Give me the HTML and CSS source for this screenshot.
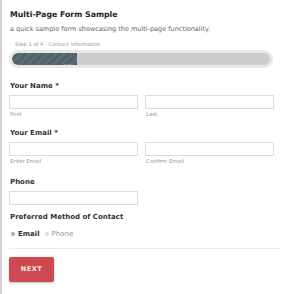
FILE: index.html
```html
<!DOCTYPE html>
<html lang="en">
<head>
    <meta charset="UTF-8">
    <meta name="viewport" content="width=device-width, initial-scale=1.0">
    <title>Multi-Page Form Sample</title>
    <link rel="stylesheet" href="styles.css">
</head>
<body>
    <div class="page">
        <form class="form">
            <h2 class="form-title">Multi-Page Form Sample</h2>
            <p class="form-desc">a quick sample form showcasing the multi-page functionality.</p>

            <!-- progress -->
            <div class="progress">
                <div class="progress-label">Step 1 of 4 - Contact Information</div>
                <div class="progress-track">
                    <div class="progress-bar" style="width: 25%"><span>25%</span></div>
                </div>
            </div>

            <div class="field field-name">
                <label class="field-label">Your Name <span class="req">*</span></label>
                <div class="field-row">
                    <div class="sub">
                        <input type="text">
                        <span class="sub-label">First</span>
                    </div>
                    <div class="sub">
                        <input type="text">
                        <span class="sub-label">Last</span>
                    </div>
                </div>
            </div>

            <div class="field field-email">
                <label class="field-label">Your Email <span class="req">*</span></label>
                <div class="field-row">
                    <div class="sub">
                        <input type="email">
                        <span class="sub-label">Enter Email</span>
                    </div>
                    <div class="sub">
                        <input type="email">
                        <span class="sub-label">Confirm Email</span>
                    </div>
                </div>
            </div>

            <div class="field field-phone">
                <label class="field-label">Phone</label>
                <div class="field-row half">
                    <div class="sub">
                        <input type="tel">
                    </div>
                </div>
            </div>

            <div class="field field-contact">
                <label class="field-label">Preferred Method of Contact</label>
                <div class="choices">
                    <label class="choice checked"><span class="dot"></span>Email</label>
                    <label class="choice"><span class="dot"></span>Phone</label>
                </div>
            </div>

            <div class="form-footer">
                <button type="button" class="next-btn">NEXT</button>
            </div>
        </form>
    </div>
</body>
</html>
```

FILE: styles.css
```css
body {
    margin: 0;
    font-family: "DejaVu Sans", sans-serif;
    background-color: #fff;
    color: #333;
}
.page {
    border-left: 2px solid #d2d2d2;
    min-height: 294px;
    box-sizing: border-box;
    padding: 9px 20px 0 7px;
}
.form-title {
    margin: 0;
    font-size: 7.8px;
    font-weight: bold;
    color: #222;
    line-height: 12px;
    padding-left: 1px;
}
.form-desc {
    margin: 3px 0 0 1px;
    font-size: 6.5px;
    color: #666;
    line-height: 10px;
}
.progress {
    margin-top: 7px;
}
.progress-label {
    font-size: 5.2px;
    color: #999;
    padding-left: 6px;
    line-height: 7px;
}
.progress-track {
    margin-top: 2px;
    width: 264px;
    box-sizing: border-box;
    height: 18px;
    border: 3px solid #e8e8e8;
    border-radius: 9px;
    background-color: #cdcdcd;
    overflow: hidden;
}
.progress-bar {
    height: 100%;
    border-radius: 6px 0 0 6px;
    background-color: #4f6069;
    background-image: repeating-linear-gradient(135deg, rgba(255,255,255,0.07) 0 3px, transparent 3px 6px);
    text-align: right;
    box-sizing: border-box;
    padding-right: 2px;
}
.progress-bar span {
    font-size: 4.8px;
    color: #d6dadc;
    line-height: 12px;
}
.field-name {
    margin-top: 14px;
}
.field-email {
    margin-top: 11px;
}
.field-phone {
    margin-top: 13px;
}
.field-contact {
    margin-top: 8px;
}
.field-label {
    display: block;
    font-size: 7px;
    font-weight: bold;
    color: #333;
    line-height: 9px;
    padding-left: 1px;
}
.req {
    color: #333;
}
.field-row {
    display: flex;
    gap: 7px;
    margin-top: 4px;
    width: 265px;
}
.field-row.half {
    width: 129px;
}
.sub {
    flex: 1;
    min-width: 0;
    display: flex;
    flex-direction: column;
}
.sub input {
    width: 100%;
    height: 14px;
    box-sizing: border-box;
    border: 1px solid #dcdcdc;
    margin: 0;
    padding: 0 4px;
    background: #fff;
}
.sub-label {
    font-size: 5.4px;
    color: #999;
    line-height: 8px;
    margin-top: 1px;
    padding-left: 1px;
}
.choices {
    display: flex;
    gap: 5px;
    margin-top: 8px;
    font-size: 7px;
    padding-left: 2px;
}
.choice {
    display: flex;
    align-items: center;
    gap: 3px;
    color: #999;
}
.choice.checked {
    color: #333;
    font-weight: bold;
}
.dot {
    width: 4px;
    height: 4px;
    border-radius: 50%;
    background-color: #dcdcdc;
}
.choice.checked .dot {
    background-color: #aaa;
}
.form-footer {
    margin-top: 10px;
    border-top: 1px solid #ececec;
    padding-top: 7px;
    width: 271px;
}
.next-btn {
    width: 45px;
    height: 25px;
    border: none;
    border-radius: 2px;
    background-color: #cf4a4f;
    color: #fbe9e9;
    font-family: "DejaVu Sans", sans-serif;
    font-size: 6.5px;
    font-weight: bold;
    letter-spacing: 0.6px;
    box-shadow: 0 1px 2px rgba(0,0,0,0.25);
    cursor: pointer;
}
```
